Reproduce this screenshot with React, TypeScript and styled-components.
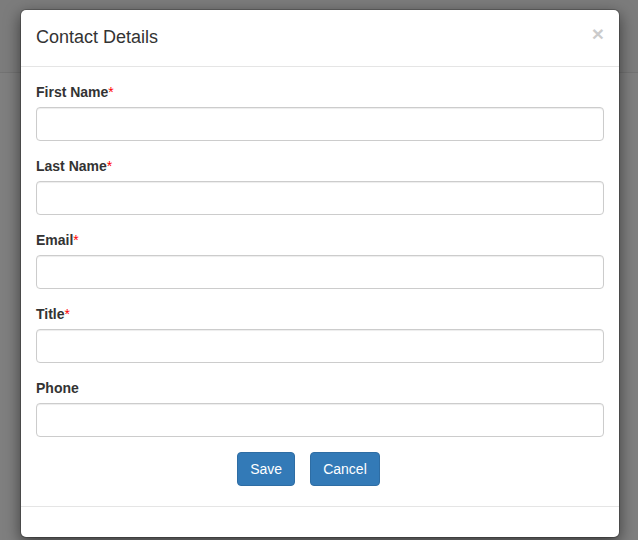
import React from "react";
import styled, { createGlobalStyle } from "styled-components";

const Global = createGlobalStyle`
  html, body { margin: 0; padding: 0; background: #fff; }
  body {
    font-family: "Liberation Sans", Arial, Helvetica, sans-serif;
    font-size: 14px;
    line-height: 1.42857143;
    color: #333;
  }
  * { box-sizing: border-box; }
`;

const Page = styled.div`
  width: 638px;
  height: 540px;
  position: relative;
  overflow: hidden;
  background: #fff;
`;

const Navbar = styled.div`
  height: 73px;
  background: #f8f8f8;
  border-bottom: 1px solid #e7e7e7;
`;

const Backdrop = styled.div`
  position: absolute;
  inset: 0;
  background: rgba(0, 0, 0, 0.5);
  display: flex;
  justify-content: flex-start;
  align-items: flex-start;
  padding: 9px 0 0 20px;
`;

const Dialog = styled.div`
  width: 600px;
  background: #fff;
  border: 1px solid rgba(0, 0, 0, 0.2);
  border-radius: 6px;
  box-shadow: 0 5px 15px rgba(0, 0, 0, 0.5);
  background-clip: padding-box;
`;

const Header = styled.div`
  padding: 15px;
  border-bottom: 1px solid #e5e5e5;
  display: flex;
  align-items: flex-start;
  justify-content: space-between;
`;

const Title = styled.h4`
  margin: 0;
  font-size: 18px;
  font-weight: 500;
  line-height: 1.42857143;
  color: #333;
`;

const Close = styled.button`
  margin-top: -2px;
  padding: 0;
  border: 0;
  background: transparent;
  font-family: "Liberation Sans", Arial, sans-serif;
  font-size: 21px;
  font-weight: 700;
  line-height: 1;
  color: #000;
  opacity: 0.2;
  text-shadow: 0 1px 0 #fff;
  cursor: pointer;
`;

const Body = styled.div`
  padding: 15px 15px 20px;
`;

const Group = styled.div`
  margin-bottom: 15px;
`;

const Label = styled.label`
  display: inline-block;
  margin-bottom: 5px;
  font-weight: 700;
  max-width: 100%;
`;

const Req = styled.span`
  color: #f00;
  font-weight: 400;
`;

const Input = styled.input`
  display: block;
  width: 100%;
  height: 34px;
  padding: 6px 12px;
  font-family: inherit;
  font-size: 14px;
  color: #555;
  background: #fff;
  border: 1px solid #ccc;
  border-radius: 4px;
  box-shadow: inset 0 1px 1px rgba(0, 0, 0, 0.075);
  outline: none;
`;

const Actions = styled.div`
  display: flex;
  justify-content: center;
  gap: 15px;
  padding-right: 23px;
`;

const Btn = styled.button`
  height: 34px;
  padding: 6px 12px;
  font-family: inherit;
  font-size: 14px;
  line-height: 1.42857143;
  color: #fff;
  background: #337ab7;
  border: 1px solid #2e6da4;
  border-radius: 4px;
  cursor: pointer;
`;

const Footer = styled.div`
  padding: 15px;
  height: 31px;
  border-top: 1px solid #e5e5e5;
  box-sizing: content-box;
  height: 0;
`;

const fields: { label: string; required: boolean }[] = [
  { label: "First Name", required: true },
  { label: "Last Name", required: true },
  { label: "Email", required: true },
  { label: "Title", required: true },
  { label: "Phone", required: false },
];

export default function App() {
  return (
    <Page>
      <Global />
      <Navbar />
      <Backdrop>
        <Dialog>
          <Header>
            <Title>Contact Details</Title>
            <Close aria-label="Close">×</Close>
          </Header>
          <Body>
            {fields.map((f) => (
              <Group key={f.label}>
                <Label>
                  {f.label}
                  {f.required && <Req>*</Req>}
                </Label>
                <Input type="text" />
              </Group>
            ))}
            <Actions>
              <Btn>Save</Btn>
              <Btn>Cancel</Btn>
            </Actions>
          </Body>
          <Footer />
        </Dialog>
      </Backdrop>
    </Page>
  );
}
